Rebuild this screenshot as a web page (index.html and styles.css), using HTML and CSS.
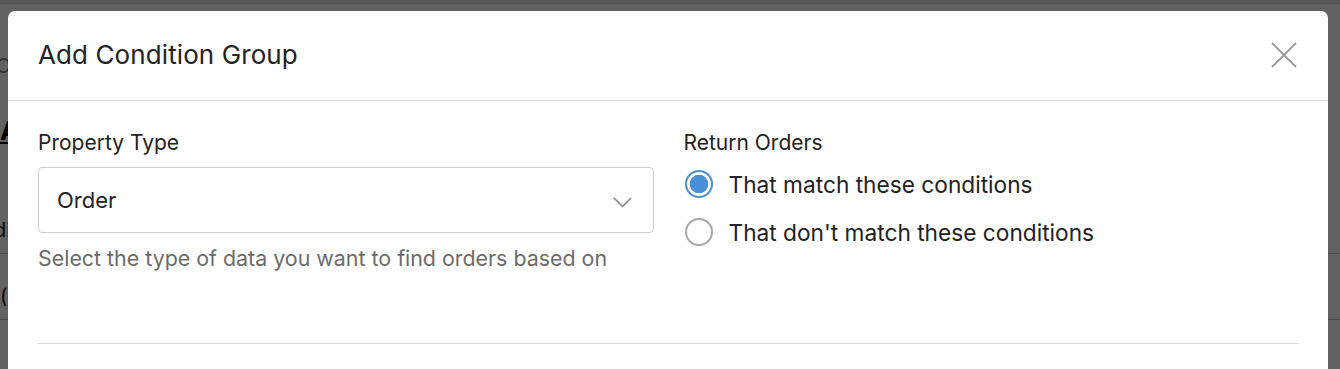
FILE: index.html
```html
<!DOCTYPE html>
<html>
<head>
<meta charset="utf-8">
<link rel="stylesheet" href="styles.css">
</head>
<body>
<div class="page">
  <div class="page-top"></div>
  <div class="page-sub">Ou</div>
  <div class="page-head">A</div>
  <div class="page-row">Edit</div>
  <div class="page-row">(</div>
  <div class="page-row"></div>
</div>
<div class="backdrop"></div>
<div class="modal">
  <div class="modal-header">
    <h2 class="modal-title">Add Condition Group</h2>
    <button class="close" aria-label="Close">
      <svg width="26" height="26" viewBox="0 0 26 26"><path d="M1 1L25 25M25 1L1 25" stroke="#9c9c9c" stroke-width="1.8" fill="none"/></svg>
    </button>
  </div>
  <div class="modal-body">
    <div class="col">
      <label class="label">Property Type</label>
      <div class="select">
        <span>Order</span>
        <svg class="chev" width="19" height="11" viewBox="0 0 19 11"><path d="M1 1L9.5 9.5L18 1" stroke="#808080" stroke-width="1.5" fill="none"/></svg>
      </div>
      <div class="help">Select the type of data you want to find orders based on</div>
    </div>
    <div class="col">
      <label class="label">Return Orders</label>
      <div class="radio"><span class="dot checked"></span><span>That match these conditions</span></div>
      <div class="radio"><span class="dot"></span><span>That don't match these conditions</span></div>
    </div>
  </div>
</div>
</body>
</html>
```
FILE: styles.css
```css
* { box-sizing: border-box; }
html, body { margin: 0; padding: 0; }
body {
  font-family: Inter, "Noto Sans", sans-serif;
  background: #f4f4f4;
  width: 1340px;
  height: 369px;
  overflow: hidden;
  color: #212529;
}
.page-top { height: 4px; background: #ddd; border-bottom: 1px solid #ccc; }
.page-sub { margin-top: 50px; font-size: 20px; line-height: 24px; color: #777; height: 30px; text-indent: -4px; }
.page-head { margin-top: 32px; font-size: 26px; line-height: 30px; font-weight: 700; color: #000; text-decoration: underline; height: 72px; }
.page-row { font-size: 20px; line-height: 24px; height: 66px; border-bottom: 1px solid #bbb; padding-top: 30px; color: #222; text-indent: -18px; }
.page-row + .page-row { text-indent: 0; }
.backdrop {
  position: fixed; inset: 0;
  background: rgba(0, 0, 0, 0.6);
}
.modal {
  position: fixed;
  top: 11px; left: 8px;
  width: 1320px;
  height: 400px;
  background: #fff;
  border-radius: 7px;
}
.modal-header {
  display: flex;
  align-items: center;
  justify-content: space-between;
  height: 90px;
  padding: 0 31px 0 30px;
  border-bottom: 1px solid #dcdcdc;
}
.modal-title {
  margin: 0;
  font-size: 26px;
  font-weight: 400;
  letter-spacing: 0.1px;
  color: #222;
  padding-bottom: 2px;
}
.close {
  background: none; border: 0; padding: 0;
  width: 26px; height: 26px;
  display: flex;
  margin-top: -1px;
}
.modal-body {
  display: grid;
  grid-template-columns: 1fr 1fr;
  column-gap: 30px;
  padding: 30px 0 73px 0;
  border-bottom: 1px solid #dcdcdc;
  margin: 0 29px 0 30px;
}
.label {
  display: block;
  font-size: 21px;
  line-height: 24px;
  color: #222;
  margin-bottom: 12px;
}
.select {
  height: 66px;
  border: 1px solid #cfcfcf;
  border-radius: 4px;
  display: flex;
  align-items: center;
  justify-content: space-between;
  padding: 0 21px 0 18px;
  font-size: 22px;
  color: #222;
}
.chev { margin-top: 4px; }
.help {
  margin-top: 13px;
  font-size: 21.4px;
  line-height: 24px;
  color: #6c6c6c;
}
.radio {
  display: flex;
  align-items: center;
  gap: 16px;
  height: 48px;
  font-size: 22.7px;
  color: #222;
  margin-top: -7px;
}
.radio + .radio { margin-top: 0; }
.dot {
  width: 28px; height: 28px;
  border-radius: 50%;
  border: 2px solid #a8a8a8;
  flex: none;
  margin-left: 1px;
}
.dot.checked {
  border-color: #4a90d9;
  background: radial-gradient(circle, #4a90d9 0 9px, #fff 9.5px);
}
```
